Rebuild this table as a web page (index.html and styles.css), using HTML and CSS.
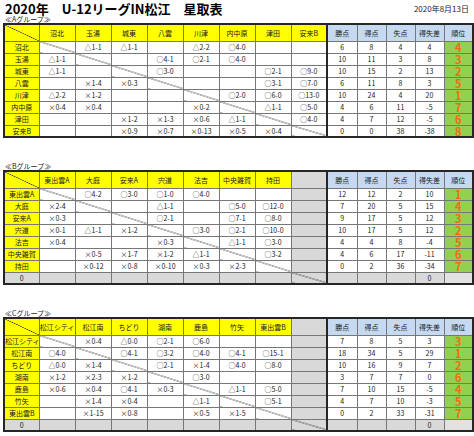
FILE: index.html
```html
<!DOCTYPE html>
<html lang="ja">
<head>
<meta charset="utf-8">
<title>星取表</title>
<link rel="stylesheet" href="styles.css">
</head>
<body>
<div class="page">
  <div class="top">
    <h1 class="title">2020年　U-12リーグIN松江　星取表</h1>
    <div class="date">2020年8月13日</div>
  </div>

  <section class="grp first">
    <div class="label">≪Aグループ≫</div>
    <table class="sheet">
      <colgroup>
        <col class="c-name"><col class="c-tm"><col class="c-tm"><col class="c-tm"><col class="c-tm"><col class="c-tm"><col class="c-tm"><col class="c-tm"><col class="c-tm"><col class="c-st1"><col class="c-st"><col class="c-st"><col class="c-st"><col class="c-st">
      </colgroup>
      <tr class="hd"><th class="dgh"></th><th>沼北</th><th>玉湯</th><th>城東</th><th>八雲</th><th>川津</th><th>内中原</th><th>津田</th><th>安来B</th><th class="sh sep">勝点</th><th class="sh">得点</th><th class="sh">失点</th><th class="sh">得失差</th><th class="sh">順位</th></tr>
      <tr><td class="nm">沼北</td><td class="dg"></td><td>△1-1</td><td>△1-1</td><td></td><td>△2-2</td><td>○4-0</td><td></td><td></td><td class="sep">6</td><td>8</td><td>4</td><td>4</td><td class="rk">4</td></tr>
      <tr><td class="nm">玉湯</td><td>△1-1</td><td class="dg"></td><td></td><td>○4-1</td><td>○2-1</td><td>○4-0</td><td></td><td></td><td class="sep">10</td><td>11</td><td>3</td><td>8</td><td class="rk">3</td></tr>
      <tr><td class="nm">城東</td><td>△1-1</td><td></td><td class="dg"></td><td>○3-0</td><td></td><td></td><td>○2-1</td><td>○9-0</td><td class="sep">10</td><td>15</td><td>2</td><td>13</td><td class="rk">2</td></tr>
      <tr><td class="nm">八雲</td><td></td><td>×1-4</td><td>×0-3</td><td class="dg"></td><td></td><td></td><td>○3-1</td><td>○7-0</td><td class="sep">6</td><td>11</td><td>8</td><td>3</td><td class="rk">5</td></tr>
      <tr><td class="nm">川津</td><td>△2-2</td><td>×1-2</td><td></td><td></td><td class="dg"></td><td>○2-0</td><td>○6-0</td><td>○13-0</td><td class="sep">10</td><td>24</td><td>4</td><td>20</td><td class="rk">1</td></tr>
      <tr><td class="nm">内中原</td><td>×0-4</td><td>×0-4</td><td></td><td></td><td>×0-2</td><td class="dg"></td><td>△1-1</td><td>○5-0</td><td class="sep">4</td><td>6</td><td>11</td><td>-5</td><td class="rk">7</td></tr>
      <tr><td class="nm">津田</td><td></td><td></td><td>×1-2</td><td>×1-3</td><td>×0-6</td><td>△1-1</td><td class="dg"></td><td>○4-0</td><td class="sep">4</td><td>7</td><td>12</td><td>-5</td><td class="rk">6</td></tr>
      <tr><td class="nm">安来B</td><td></td><td></td><td>×0-9</td><td>×0-7</td><td>×0-13</td><td>×0-5</td><td>×0-4</td><td class="dg"></td><td class="sep">0</td><td>0</td><td>38</td><td>-38</td><td class="rk">8</td></tr>
    </table>
  </section>

  <section class="grp">
    <div class="label">≪Bグループ≫</div>
    <table class="sheet">
      <colgroup>
        <col class="c-name"><col class="c-tm"><col class="c-tm"><col class="c-tm"><col class="c-tm"><col class="c-tm"><col class="c-tm"><col class="c-tm"><col class="c-tm"><col class="c-st1"><col class="c-st"><col class="c-st"><col class="c-st"><col class="c-st">
      </colgroup>
      <tr class="hd"><th class="dgh"></th><th>東出雲A</th><th>大庭</th><th>安来A</th><th>宍道</th><th>法吉</th><th>中央雑賀</th><th>持田</th><th class="gr"></th><th class="sh sep">勝点</th><th class="sh">得点</th><th class="sh">失点</th><th class="sh">得失差</th><th class="sh">順位</th></tr>
      <tr><td class="nm">東出雲A</td><td class="dg"></td><td>○4-2</td><td>○3-0</td><td>○1-0</td><td>○4-0</td><td></td><td></td><td class="gr"></td><td class="sep">12</td><td>12</td><td>2</td><td>10</td><td class="rk">1</td></tr>
      <tr><td class="nm">大庭</td><td>×2-4</td><td class="dg"></td><td></td><td>△1-1</td><td></td><td>○5-0</td><td>○12-0</td><td class="gr"></td><td class="sep">7</td><td>20</td><td>5</td><td>15</td><td class="rk">4</td></tr>
      <tr><td class="nm">安来A</td><td>×0-3</td><td></td><td class="dg"></td><td>○2-1</td><td></td><td>○7-1</td><td>○8-0</td><td class="gr"></td><td class="sep">9</td><td>17</td><td>5</td><td>12</td><td class="rk">3</td></tr>
      <tr><td class="nm">宍道</td><td>×0-1</td><td>△1-1</td><td>×1-2</td><td class="dg"></td><td>○3-0</td><td>○2-1</td><td>○10-0</td><td class="gr"></td><td class="sep">10</td><td>17</td><td>5</td><td>12</td><td class="rk">2</td></tr>
      <tr><td class="nm">法吉</td><td>×0-4</td><td></td><td></td><td>×0-3</td><td class="dg"></td><td>△1-1</td><td>○3-0</td><td class="gr"></td><td class="sep">4</td><td>4</td><td>8</td><td>-4</td><td class="rk">5</td></tr>
      <tr><td class="nm">中央雑賀</td><td></td><td>×0-5</td><td>×1-7</td><td>×1-2</td><td>△1-1</td><td class="dg"></td><td>○3-2</td><td class="gr"></td><td class="sep">4</td><td>6</td><td>17</td><td>-11</td><td class="rk">6</td></tr>
      <tr><td class="nm">持田</td><td></td><td>×0-12</td><td>×0-8</td><td>×0-10</td><td>×0-3</td><td>×2-3</td><td class="dg"></td><td class="gr"></td><td class="sep">0</td><td>2</td><td>36</td><td>-34</td><td class="rk">7</td></tr>
      <tr class="zero"><td class="gr">0</td><td class="gr"></td><td class="gr"></td><td class="gr"></td><td class="gr"></td><td class="gr"></td><td class="gr"></td><td class="gr"></td><td class="gr dg"></td><td class="gr sep"></td><td class="gr"></td><td class="gr"></td><td class="gr">0</td><td class="gr lt"></td></tr>
    </table>
  </section>

  <section class="grp">
    <div class="label">≪Cグループ≫</div>
    <table class="sheet">
      <colgroup>
        <col class="c-name"><col class="c-tm"><col class="c-tm"><col class="c-tm"><col class="c-tm"><col class="c-tm"><col class="c-tm"><col class="c-tm"><col class="c-tm"><col class="c-st1"><col class="c-st"><col class="c-st"><col class="c-st"><col class="c-st">
      </colgroup>
      <tr class="hd"><th class="dgh"></th><th>松江シティ</th><th>松江南</th><th>ちどり</th><th>湖南</th><th>鹿島</th><th>竹矢</th><th>東出雲B</th><th class="gr"></th><th class="sh sep">勝点</th><th class="sh">得点</th><th class="sh">失点</th><th class="sh">得失差</th><th class="sh">順位</th></tr>
      <tr><td class="nm">松江シティ</td><td class="dg"></td><td>×0-4</td><td>△0-0</td><td>○2-1</td><td>○6-0</td><td></td><td></td><td class="gr"></td><td class="sep">7</td><td>8</td><td>5</td><td>3</td><td class="rk">3</td></tr>
      <tr><td class="nm">松江南</td><td>○4-0</td><td class="dg"></td><td>○4-1</td><td>○3-2</td><td>○4-0</td><td>○4-1</td><td>○15-1</td><td class="gr"></td><td class="sep">18</td><td>34</td><td>5</td><td>29</td><td class="rk">1</td></tr>
      <tr><td class="nm">ちどり</td><td>△0-0</td><td>×1-4</td><td class="dg"></td><td>○2-1</td><td>×1-4</td><td>○4-0</td><td>○8-0</td><td class="gr"></td><td class="sep">10</td><td>16</td><td>9</td><td>7</td><td class="rk">2</td></tr>
      <tr><td class="nm">湖南</td><td>×1-2</td><td>×2-3</td><td>×1-2</td><td class="dg"></td><td>○3-0</td><td></td><td></td><td class="gr"></td><td class="sep">3</td><td>7</td><td>7</td><td>0</td><td class="rk">6</td></tr>
      <tr><td class="nm">鹿島</td><td>×0-6</td><td>×0-4</td><td>○4-1</td><td>×0-3</td><td class="dg"></td><td>△1-1</td><td>○5-0</td><td class="gr"></td><td class="sep">7</td><td>10</td><td>15</td><td>-5</td><td class="rk">4</td></tr>
      <tr><td class="nm">竹矢</td><td></td><td>×1-4</td><td>×0-4</td><td></td><td>△1-1</td><td class="dg"></td><td>○5-1</td><td class="gr"></td><td class="sep">4</td><td>7</td><td>10</td><td>-3</td><td class="rk">5</td></tr>
      <tr><td class="nm">東出雲B</td><td></td><td>×1-15</td><td>×0-8</td><td></td><td>×0-5</td><td>×1-5</td><td class="dg"></td><td class="gr"></td><td class="sep">0</td><td>2</td><td>33</td><td>-31</td><td class="rk">7</td></tr>
      <tr class="zero"><td class="gr">0</td><td class="gr"></td><td class="gr"></td><td class="gr"></td><td class="gr"></td><td class="gr"></td><td class="gr"></td><td class="gr"></td><td class="gr dg"></td><td class="gr sep"></td><td class="gr"></td><td class="gr"></td><td class="gr">0</td><td class="gr lt"></td></tr>
    </table>
  </section>
</div>
</body>
</html>
```

FILE: styles.css
```css
* {
  box-sizing: border-box;
}

body {
  margin: 0;
  background: #ffffff;
  color: #000000;
  font-family: "Noto Sans CJK JP", "Noto Sans", sans-serif;
}

.page {
  width: 474px;
  padding: 0 2px 0 3px;
}

.top {
  display: flex;
  justify-content: space-between;
  align-items: flex-start;
  height: 16px;
}

.title {
  margin: 0;
  padding: 1px 0 0 2px;
  font-size: 13px;
  font-weight: bold;
  line-height: 15px;
  white-space: nowrap;
}

.date {
  padding-top: 4px;
  padding-right: 3px;
  font-size: 8px;
  line-height: 9px;
  color: #222222;
}

.grp {
  margin-top: 25px;
}

.grp.first {
  margin-top: 0;
}

.label {
  height: 7px;
  padding-left: 2px;
  font-size: 7px;
  line-height: 7px;
  color: #222222;
}

.sheet {
  width: 469px;
  border-collapse: collapse;
  table-layout: fixed;
  border: 2px solid #262626;
}

.c-name { width: 35px; }
.c-tm { width: 36px; }
.c-st1 { width: 30px; }
.c-st { width: 29px; }

.sheet td,
.sheet th {
  padding: 0;
  border: 1px solid #777777;
  height: 12px;
  font-size: 7px;
  font-weight: normal;
  line-height: 10px;
  text-align: center;
  white-space: nowrap;
  overflow: hidden;
  color: #1a1a1a;
}

.sheet th {
  height: 17px;
  background: #ffff00;
}

.sheet th.sh {
  background: #c5d9f1;
}

.sheet .sep {
  border-left: 2px solid #262626;
}

.sheet td.nm {
  background: #ffff00;
}

.sheet .gr {
  background-color: #d9d9d9;
}

.sheet .gr.lt {
  background-color: #e2e2e2;
}

.sheet .dg,
.sheet .dgh {
  background-image: linear-gradient(to top right, transparent calc(50% - 0.6px), #3a3a3a 50%, transparent calc(50% + 0.6px));
}

.sheet td.rk {
  background: #92d050;
  color: #f26a12;
  font-size: 11px;
  font-weight: bold;
  line-height: 10px;
  overflow: visible;
}
```
